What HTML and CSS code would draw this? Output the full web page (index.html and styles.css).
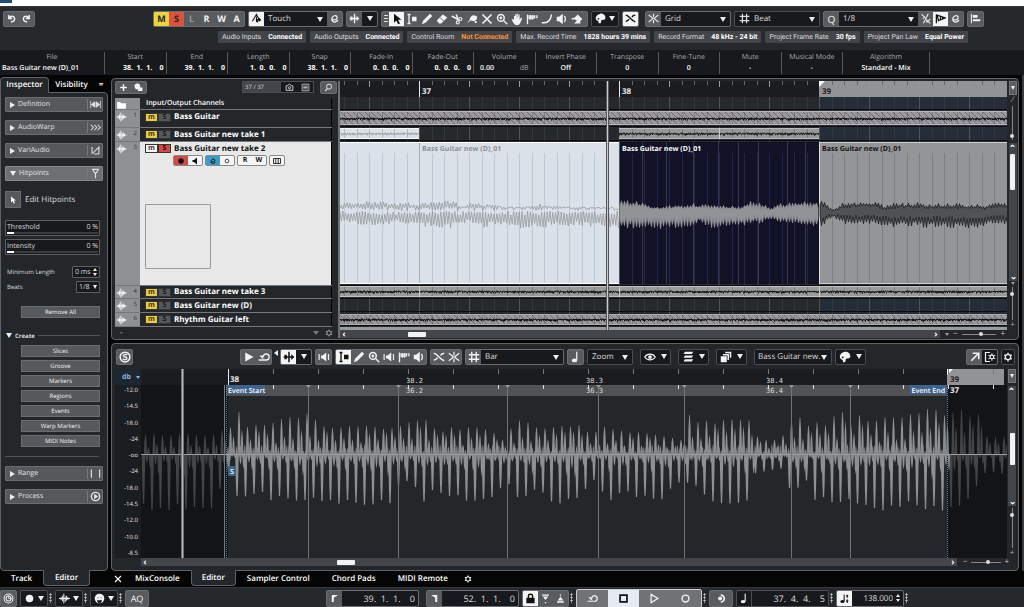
FILE: index.html
```html
<!DOCTYPE html>
<html lang="en">
<head>
<meta charset="utf-8">
<title>Project – Sample Editor</title>
<link rel="stylesheet" href="styles.css">
</head>
<body>
<svg class="sprite" aria-hidden="true">
  <symbol id="undo" viewBox="0 0 16 16"><path d="M4 3v5h5M4.500 7.500C7 3.500 12.500 4 12.500 8.500c0 3-2.500 4.500-5.500 4.500" fill="none" stroke="currentColor" stroke-width="2"/></symbol>
  <symbol id="redo" viewBox="0 0 16 16"><path d="M12 3v5H7M11.500 7.500C9 3.500 3.500 4 3.500 8.500c0 3 2.500 4.500 5.500 4.500" fill="none" stroke="currentColor" stroke-width="2"/></symbol>
  <symbol id="edit" viewBox="0 0 16 16"><path d="M4 9.500C10 11 13 8 11.500 5.500 10 3 6 3.500 4.500 7 3 11 6 14 9 13c2-.6 3.500-2 4-3" fill="none" stroke="currentColor" stroke-width="1.800"/></symbol>
  <symbol id="metro" viewBox="0 0 16 16"><path d="M2 12 8 2l4 8H7M8 5v8M8 10l5-1" fill="none" stroke="currentColor" stroke-width="1.500"/><path d="m11 6 4 4-4 3zM7 10h3v5z" fill="currentColor"/></symbol>
  <symbol id="locate" viewBox="0 0 16 16"><path d="M8 1v14M1 8h13" stroke="currentColor" stroke-width="2"/><path d="M2 5h3v6H2zM11 4l4 4-4 4z" fill="currentColor"/></symbol>
  <symbol id="arrow" viewBox="0 0 16 16"><path d="M4 1v12l3-3 2.500 5 2.500-1-2.500-5H14z" fill="currentColor"/></symbol>
  <symbol id="range" viewBox="0 0 16 16"><path d="M2 2h4M2 14h4M4 2v12" stroke="currentColor" stroke-width="1.800"/><path d="M8 5h6v6H8z" fill="currentColor"/></symbol>
  <symbol id="pencil" viewBox="0 0 16 16"><path d="m1 15 2-5 9-9 3 3-9 9z" fill="currentColor"/></symbol>
  <symbol id="eraser" viewBox="0 0 16 16"><path d="m1 10 8-8 6 4-8 8H4z" fill="currentColor"/><path d="m5 6 6 5" stroke="#55585b"/></symbol>
  <symbol id="cut" viewBox="0 0 16 16"><path d="m1 4 9 5M7 2l3 8" stroke="currentColor" stroke-width="2"/><circle cx="12.500" cy="8" r="2" fill="none" stroke="currentColor" stroke-width="1.500"/><circle cx="9" cy="12.500" r="2" fill="none" stroke="currentColor" stroke-width="1.500"/></symbol>
  <symbol id="glue" viewBox="0 0 16 16"><path d="m1 14 4-5c0-3 3-6 5-6l4 1c2 2 0 6-3 7l-5-1z" fill="currentColor"/><circle cx="13" cy="12" r="1.500" fill="currentColor"/></symbol>
  <symbol id="cross" viewBox="0 0 16 16"><path d="m2 2 12 12M14 2 2 14" stroke="currentColor" stroke-width="2.200"/></symbol>
  <symbol id="zoom" viewBox="0 0 16 16"><circle cx="6.500" cy="6.500" r="4.500" fill="none" stroke="currentColor" stroke-width="2"/><path d="m10 10 5 5M4.500 6.500h4M6.500 4.500v4" stroke="currentColor" stroke-width="1.800"/></symbol>
  <symbol id="hand" viewBox="0 0 16 16"><path d="M4 9V4h1.500v4V2H7v6l.5-7H9v7l1-6h1.500v7l2-3 1.500 1-3 7-2 2H6l-3-3-2-4 1-1z" fill="currentColor"/></symbol>
  <symbol id="comp" viewBox="0 0 16 16"><path d="M2 2v13M5.500 3v6M8.500 3v6M11.500 3v4M14.500 3v4" stroke="currentColor" stroke-width="1.800"/><path d="M3 3h8v5H3z" fill="currentColor" opacity=".7"/></symbol>
  <symbol id="curve" viewBox="0 0 16 16"><path d="M1 13c8 1 12-3 13-11" fill="none" stroke="currentColor" stroke-width="2"/></symbol>
  <symbol id="speaker" viewBox="0 0 16 16"><path d="M1 5h3l5-4v14l-5-4H1z" fill="currentColor"/><path d="M11 4c2 2 2 6 0 8" fill="none" stroke="currentColor" stroke-width="1.800"/></symbol>
  <symbol id="bucket" viewBox="0 0 16 16"><path d="m4 7 5-5 6 6-5 6H4l4-4z" fill="currentColor"/><path d="M1 8c5-2 9 1 11 6" stroke="currentColor" stroke-width="2" fill="none"/></symbol>
  <symbol id="palette" viewBox="0 0 16 16"><path d="M7.500 1C12 0 16 4 15 8c0 2-3 2-5 2s0 5-3 5H5c1-2 0-3-2-4C0 9 0 3 7.500 1z" fill="currentColor"/><circle cx="5" cy="8.500" r="1.300" fill="#202326"/></symbol>
  <symbol id="xfade" viewBox="0 0 16 16"><path d="M1 3c3 0 4 2 7 5s4 4 7 5M1 12c3 0 4-2 5-3M10 6c1-2 3-3 5-3" fill="none" stroke="currentColor" stroke-width="2"/></symbol>
  <symbol id="snap" viewBox="0 0 16 16"><path d="M8 1v5M8 10v5M1 3l4 3M15 3l-4 3M1 13l4-3M15 13l-4-3M5 6l2 2-2 2M11 6 9 8l2 2" fill="none" stroke="currentColor" stroke-width="1.600"/></symbol>
  <symbol id="hash" viewBox="0 0 16 16"><path d="M5 1v14M11 1v14M1 5h14M1 11h14" stroke="currentColor" stroke-width="1.800"/></symbol>
  <symbol id="triplet" viewBox="0 0 16 16"><path d="M12 1 5 15M2 2l5 4-3 2M10 9v5M15 9l-4 3 4 3" stroke="currentColor" stroke-width="1.500" fill="none"/></symbol>
  <symbol id="flag" viewBox="0 0 16 16"><path d="M2 2v13M3 3l12 4-10 4zM8 5v4M11 5v4" fill="none" stroke="currentColor" stroke-width="1.800"/></symbol>
  <symbol id="align" viewBox="0 0 16 16"><path d="M2 1v14" stroke="currentColor" stroke-width="1.500"/><path d="M4 3h7v4H4zM4 9h11v3H4z" fill="currentColor"/></symbol>
  <symbol id="plus" viewBox="0 0 16 16"><path d="M8 2v12M2 8h12" stroke="currentColor" stroke-width="2.500"/></symbol>
  <symbol id="preset" viewBox="0 0 16 16"><path d="M1 7a5 5 0 0 1 10-2v3h4v6H7v-3H3z" fill="currentColor"/></symbol>
  <symbol id="camera" viewBox="0 0 16 16"><path d="M2 5h2l4-3 4 3h2v8H2z" fill="none" stroke="currentColor" stroke-width="1.600"/><circle cx="8" cy="8.500" r="2" fill="none" stroke="currentColor" stroke-width="1.500"/></symbol>
  <symbol id="list" viewBox="0 0 16 16"><path d="M2 2h12v12H2zM4 5.500h8M4 8h8M4 10.500h8" fill="none" stroke="currentColor" stroke-width="1.400"/></symbol>
  <symbol id="search" viewBox="0 0 16 16"><circle cx="9" cy="6.500" r="4.500" fill="none" stroke="currentColor" stroke-width="1.600"/><path d="m6 10-4 4" stroke="currentColor" stroke-width="2"/></symbol>
  <symbol id="folder" viewBox="0 0 16 16"><path d="M1 3h5l1 2h8v9H1z" fill="currentColor"/></symbol>
  <symbol id="wave" viewBox="0 0 16 16"><path d="M0 8h16M3 6v4M5 4v8M7 1v14M9 5v8M11 4v7M13 6v4" stroke="currentColor" stroke-width="1.400"/></symbol>
  <symbol id="mono" viewBox="0 0 16 16"><path d="M3 6h3l6-5v14l-6-5H3z" fill="currentColor"/></symbol>
  <symbol id="vibr" viewBox="0 0 16 16"><path d="M4 6h2l5-4v12l-5-4H4z" fill="currentColor"/><path d="M1.500 4v8M14 4v8" stroke="currentColor" stroke-width="1.600"/></symbol>
  <symbol id="cycle" viewBox="0 0 16 16"><path d="M1 12h10a4 4 0 1 0-4-5H4l3 3" fill="none" stroke="currentColor" stroke-width="1.800"/></symbol>
  <symbol id="play" viewBox="0 0 16 16"><path d="m3 2 11 6-11 6z" fill="currentColor"/></symbol>
  <symbol id="playo" viewBox="0 0 16 16"><path d="m3 2 10 6-10 6z" fill="none" stroke="currentColor" stroke-width="1.800"/></symbol>
  <symbol id="stop" viewBox="0 0 16 16"><path d="M3 3h10v10H3z" fill="none" stroke="currentColor" stroke-width="2.500"/></symbol>
  <symbol id="ring" viewBox="0 0 16 16"><circle cx="8" cy="8" r="5" fill="none" stroke="currentColor" stroke-width="2"/></symbol>
  <symbol id="dot" viewBox="0 0 16 16"><circle cx="8" cy="8" r="5.500" fill="currentColor"/></symbol>
  <symbol id="solo" viewBox="0 0 16 16"><circle cx="8" cy="8" r="6.500" fill="none" stroke="currentColor" stroke-width="2"/><path d="M11 5.500C9 3.500 5 5 6 7c1 1.500 4 .5 4.500 2.500S7 12.500 5 10.500" fill="none" stroke="currentColor" stroke-width="1.800"/></symbol>
  <symbol id="note" viewBox="0 0 16 16"><ellipse cx="6" cy="12.500" rx="3.500" ry="2.500" fill="currentColor"/><path d="M9 12V1" stroke="currentColor" stroke-width="1.600"/></symbol>
  <symbol id="eye" viewBox="0 0 16 16"><path d="M1 8c3-5 11-5 14 0-3 5-11 5-14 0z" fill="none" stroke="currentColor" stroke-width="1.600"/><circle cx="8" cy="8" r="2.500" fill="currentColor"/></symbol>
  <symbol id="layers" viewBox="0 0 16 16"><path d="M4 1h11l-2 3H2zM4 6h11l-2 3H2zM4 11h11l-2 3H2z" fill="currentColor"/></symbol>
  <symbol id="stack" viewBox="0 0 16 16"><path d="M7 1h8v8h-2V3H7zM4 4h8v8h-2V6H4zM1 7h8v8H1z" fill="currentColor"/></symbol>
  <symbol id="popout" viewBox="0 0 16 16"><path d="M5 3h8v8M13 3 3 13" fill="none" stroke="currentColor" stroke-width="2.200"/></symbol>
  <symbol id="gear" viewBox="0 0 16 16"><circle cx="8" cy="8" r="4.300" fill="none" stroke="currentColor" stroke-width="2"/><path d="M8 1v3M8 12v3M2 4.500l2.500 1.500M11.500 10l2.500 1.500M2 11.500 4.500 10M11.500 6 14 4.500" stroke="currentColor" stroke-width="2.200"/></symbol>
  <symbol id="setup" viewBox="0 0 16 16"><path d="M8 2H2v12h6" fill="none" stroke="currentColor" stroke-width="1.600"/><circle cx="10.500" cy="8" r="2.500" fill="none" stroke="currentColor" stroke-width="1.600"/><path d="M10.500 3v2M10.500 11v2M6 5.500l2 1M13 9.500l2 1M6 10.500l2-1M13 6.500l2-1" stroke="currentColor" stroke-width="1.400"/></symbol>
  <symbol id="lock" viewBox="0 0 16 16"><path d="M2 7h12v8H2z" fill="currentColor"/><path d="M5 8V4c0-3 6-3 6 0v4" fill="none" stroke="currentColor" stroke-width="2"/></symbol>
  <symbol id="punchin" viewBox="0 0 16 16"><path d="M3 2h10v2H3zM4 5h8l-4 5zM7 13h2v2H7z" fill="currentColor"/></symbol>
  <symbol id="punchout" viewBox="0 0 16 16"><path d="M7 2h2v2H7zM8 5l4 6H4zM3 12h10v2H3z" fill="currentColor"/></symbol>
  <symbol id="locl" viewBox="0 0 16 16"><path d="M4 3h9L7 7v6H4z" fill="currentColor"/></symbol>
  <symbol id="locr" viewBox="0 0 16 16"><path d="M12 3H3l6 4v6h3z" fill="currentColor"/></symbol>
  <symbol id="mix" viewBox="0 0 16 16"><circle cx="6" cy="8" r="3" fill="currentColor"/><path d="M7 3a5 5 0 1 1 0 10" fill="none" stroke="currentColor" stroke-width="2.500"/></symbol>
  <symbol id="tempo" viewBox="0 0 16 16"><ellipse cx="5" cy="12.500" rx="3" ry="2.200" fill="currentColor"/><path d="M7.500 12V2M12 7V3M12 9v5" stroke="currentColor" stroke-width="1.500"/><path d="m10 5 2-3 2 3zM10 11l2 3 2-3z" fill="currentColor"/></symbol>
  <symbol id="clock" viewBox="0 0 16 16"><circle cx="8" cy="8" r="6.500" fill="none" stroke="currentColor" stroke-width="1.500"/><circle cx="8" cy="8" r="3.500" fill="none" stroke="currentColor" stroke-width="1.500"/><path d="M8 8V4M8 8h5" stroke="currentColor"/></symbol>
  <symbol id="din" viewBox="0 0 16 16"><circle cx="8" cy="8" r="7" fill="currentColor"/><path d="M5 11h6l-1 3H6zM5 7h1.500M9.500 7H11" fill="#17191c" stroke="#17191c" stroke-width="1"/></symbol>
  <symbol id="defn" viewBox="0 0 16 16"><path d="M1 3v10M15 3v10M2 8l5-4v8zM14 8 9 4v8z" fill="currentColor" stroke="currentColor" stroke-width="1.200"/></symbol>
  <symbol id="warp" viewBox="0 0 16 16"><path d="m1 4 4 4-4 4M6 4l4 4-4 4M11 4l4 4-4 4" fill="none" stroke="currentColor" stroke-width="1.500"/></symbol>
  <symbol id="vari" viewBox="0 0 16 16"><path d="M3 3v10M13 2v11M4 12l9-9M6 13h7" fill="none" stroke="currentColor" stroke-width="1.500"/></symbol>
  <symbol id="hitp" viewBox="0 0 16 16"><path d="M3 2h10M4 3l4 5 4-5M8 7v8" fill="none" stroke="currentColor" stroke-width="1.600"/></symbol>
  <symbol id="bars" viewBox="0 0 16 16"><path d="M2 2v12M14 2v12" stroke="currentColor" stroke-width="1.600"/></symbol>
  <symbol id="proc" viewBox="0 0 16 16"><circle cx="8" cy="8" r="6" fill="none" stroke="currentColor" stroke-width="2"/><path d="m6 4 6 4-6 4z" fill="currentColor"/></symbol>
  <symbol id="lanes" viewBox="0 0 16 16"><path d="M1 3h14v10H1zM5.500 3v10M10.500 3v10" fill="none" stroke="currentColor" stroke-width="1.700"/></symbol>
</svg>

<div class="app">
  <div class="titlebar"><span class="appicon"></span></div>
  <header class="top">
    <div class="toolbar main-tools">
      <div class="group"><button aria-label="Undo"><svg><use href="#undo"/></svg></button><button aria-label="Redo"><svg><use href="#redo"/></svg></button></div>
      <div class="group letters push"><button class="mute">M</button><button class="solo">S</button><button class="dim">L</button><button>R</button><button>W</button><button>A</button></div>
      <div class="group"><button class="on" aria-label="Automation"><svg><use href="#metro"/></svg></button><span class="sel w-touch"><select aria-label="Automation mode"><option>Touch</option></select></span><button aria-label="Edit automation"><svg><use href="#edit"/></svg></button></div>
      <div class="group"><button aria-label="Auto-scroll"><svg><use href="#locate"/></svg></button><button class="dark" aria-label="Auto-scroll options"><i class="tri"></i></button></div>
      <div class="group tools">
        <span class="grip"></span>
        <button class="on" aria-label="Select"><svg><use href="#arrow"/></svg></button><button aria-label="Range"><svg><use href="#range"/></svg></button><button aria-label="Draw"><svg><use href="#pencil"/></svg></button><button aria-label="Erase"><svg><use href="#eraser"/></svg></button><button aria-label="Split"><svg><use href="#cut"/></svg></button><button aria-label="Glue"><svg><use href="#glue"/></svg></button><button aria-label="Mute"><svg><use href="#cross"/></svg></button><button aria-label="Zoom"><svg><use href="#zoom"/></svg></button><button aria-label="Hand"><svg><use href="#hand"/></svg></button><button aria-label="Comp"><svg><use href="#comp"/></svg></button><button aria-label="Line"><svg><use href="#curve"/></svg></button><button aria-label="Play"><svg><use href="#speaker"/></svg></button><button aria-label="Color"><svg><use href="#bucket"/></svg></button>
      </div>
      <div class="group black"><button aria-label="Color menu"><svg><use href="#palette"/></svg><i class="tri"></i></button></div>
      <div class="group"><button class="on" aria-label="Zero crossings"><svg><use href="#xfade"/></svg></button></div>
      <div class="group gap"><button aria-label="Snap"><svg><use href="#snap"/></svg></button><span class="sel w-grid"><select aria-label="Snap type"><option>Grid</option></select></span></div>
      <div class="group black"><svg class="lead"><use href="#hash"/></svg><span class="sel w-beat"><select aria-label="Grid type"><option>Beat</option></select></span></div>
      <div class="group"><button class="q">Q</button><span class="sel w-quant"><select aria-label="Quantize"><option>1/8</option></select></span><button aria-label="Soft quantize"><svg><use href="#triplet"/></svg></button><button class="on" aria-label="Iterative"><svg><use href="#flag"/></svg></button><button aria-label="Quantize panel"><svg><use href="#edit"/></svg></button></div>
      <div class="group"><button aria-label="Align"><svg><use href="#align"/></svg></button></div>
    </div>
    <div class="chips">
      <span class="chip">Audio Inputs<b>Connected</b></span>
      <span class="chip">Audio Outputs<b>Connected</b></span>
      <span class="chip">Control Room<b class="warn">Not Connected</b></span>
      <span class="chip">Max. Record Time<b>1828 hours 39 mins</b></span>
      <span class="chip">Record Format<b>48 kHz - 24 bit</b></span>
      <span class="chip">Project Frame Rate<b>30 fps</b></span>
      <span class="chip">Project Pan Law<b>Equal Power</b></span>
    </div>
  </header>

  <dl class="info">
    <div class="file"><dt>File</dt><dd>Bass Guitar new (D)_01</dd></div>
    <div class="num"><dt>Start</dt><dd>38.  1.  1.    0</dd></div>
    <div class="num"><dt>End</dt><dd>39.  1.  1.    0</dd></div>
    <div class="num"><dt>Length</dt><dd>1.  0.  0.    0</dd></div>
    <div class="num"><dt>Snap</dt><dd>38.  1.  1.    0</dd></div>
    <div class="num"><dt>Fade-In</dt><dd>0.  0.  0.    0</dd></div>
    <div class="num"><dt>Fade-Out</dt><dd>0.  0.  0.    0</dd></div>
    <div class="vol"><dt>Volume</dt><dd>0.00<span>dB</span></dd></div>
    <div><dt>Invert Phase</dt><dd>Off</dd></div>
    <div><dt>Transpose</dt><dd>0</dd></div>
    <div><dt>Fine-Tune</dt><dd>0</dd></div>
    <div><dt>Mute</dt><dd>-</dd></div>
    <div><dt>Musical Mode</dt><dd>-</dd></div>
    <div class="algo"><dt>Algorithm</dt><dd>Standard - Mix</dd></div>
  </dl>

  <main class="work">
    <aside class="left">
      <nav class="tabs toptabs"><button class="tab active">Inspector</button><button class="tab">Visibility</button><button class="tab menu">=</button></nav>
      <div class="panel inspector">
        <button class="section"><i class="tri r"></i><span>Definition</span><svg><use href="#defn"/></svg></button>
        <button class="section"><i class="tri r"></i><span>AudioWarp</span><svg><use href="#warp"/></svg></button>
        <button class="section"><i class="tri r"></i><span>VariAudio</span><svg><use href="#vari"/></svg></button>
        <button class="section open"><i class="tri"></i><span>Hitpoints</span><svg><use href="#hitp"/></svg></button>
        <div class="edit"><button id="edithp" aria-label="Edit Hitpoints"><svg><use href="#arrow"/></svg></button><label for="edithp">Edit Hitpoints</label></div>
        <div class="sliders">
          <div class="slider"><label for="thr">Threshold</label><output for="thr">0 %</output><input id="thr" type="range" value="0"></div>
          <div class="slider"><label for="int">Intensity</label><output for="int">0 %</output><input id="int" type="range" value="0"></div>
        </div>
        <div class="fields">
          <div class="field"><label for="minlen">Minimum Length</label><span class="spin"><input id="minlen" value="0 ms"><i class="updown"></i></span></div>
          <div class="field"><label for="beats">Beats</label><span class="sel w-beats"><select id="beats"><option>1/8</option></select></span></div>
        </div>
        <button class="wide">Remove All</button>
        <div class="create"><i class="tri"></i><b>Create</b></div>
        <div class="stack"><button class="wide">Slices</button><button class="wide">Groove</button><button class="wide">Markers</button><button class="wide">Regions</button><button class="wide">Events</button><button class="wide">Warp Markers</button><button class="wide">MIDI Notes</button></div>
        <hr>
        <button class="section"><i class="tri r"></i><span>Range</span><svg><use href="#bars"/></svg></button>
        <button class="section"><i class="tri r"></i><span>Process</span><svg><use href="#proc"/></svg></button>
      </div>
      <nav class="tabs lefttabs"><button class="tab">Track</button><button class="tab active">Editor</button></nav>
    </aside>

    <section class="right">
      <div class="panel project">
        <div class="tracks">
          <div class="trackhead">
            <div class="group"><button aria-label="Add track"><svg><use href="#plus"/></svg></button><button aria-label="Track preset"><svg><use href="#preset"/></svg></button></div>
            <div class="count"><span>37 / 37</span><button aria-label="Visibility agents"><svg><use href="#camera"/></svg></button><button aria-label="Track types"><svg><use href="#list"/></svg></button></div>
            <div class="group"><button aria-label="Find track"><svg><use href="#search"/></svg></button></div>
          </div>
          <div class="track io"><div class="side"><svg><use href="#folder"/></svg></div><div class="body"><b>Input/Output Channels</b></div></div>
          <div class="track t1"><div class="side"><svg><use href="#wave"/></svg>1</div><div class="body"><button class="m">m</button><button class="s">S</button><b>Bass Guitar</b></div></div>
          <div class="track t2"><div class="side"><svg><use href="#wave"/></svg>2</div><div class="body"><button class="m">m</button><button class="s">S</button><b>Bass Guitar new take 1</b></div></div>
          <div class="track t3"><div class="side"><svg><use href="#wave"/></svg>3</div><div class="body">
            <div class="line"><button class="m off">m</button><button class="s hot">S</button><b>Bass Guitar new take 2</b></div>
            <div class="ctl"><span class="pair"><button class="rec" aria-label="Record enable"><svg><use href="#dot"/></svg></button><button aria-label="Monitor"><svg><use href="#mono"/></svg></button></span><span class="pair"><button class="blue" aria-label="Edit channel"><svg><use href="#edit"/></svg></button><button aria-label="Bypass"><svg class="tiny"><use href="#ring"/></svg></button></span><span class="pair"><button>R</button><button>W</button></span><span class="pair"><button aria-label="Lanes"><svg><use href="#lanes"/></svg></button></span></div>
            <div class="picture"></div>
          </div></div>
          <div class="track t4"><div class="side"><svg><use href="#wave"/></svg>4</div><div class="body"><button class="m">m</button><button class="s">S</button><b>Bass Guitar new take 3</b></div></div>
          <div class="track t5"><div class="side"><svg><use href="#wave"/></svg>5</div><div class="body"><button class="m">m</button><button class="s">S</button><b>Bass Guitar new (D)</b></div></div>
          <div class="track t6"><div class="side"><svg><use href="#wave"/></svg>6</div><div class="body"><button class="m">m</button><button class="s">S</button><b>Rhythm Guitar left</b></div></div>
          <div class="trackfoot"><span>-</span><i class="tri"></i><svg><use href="#gear"/></svg></div>
        </div>
        <div class="divider"></div>
        <div class="timeline">
          <svg id="arrange" class="arrange" role="img" aria-label="Project timeline"></svg>
          <div class="hscroll"><span class="chev">‹</span><span class="thumb t-arr"></span><span class="chev end">›</span></div>
        </div>
        <div class="vbar">
          <button class="drop" aria-label="Ruler options"><i class="tri"></i></button>
          <span class="sign">⁄</span>
          <span class="vline"></span>
          <div class="vscroll"><span class="chev up">‹</span><span class="thumb"></span><span class="chev dn">‹</span></div>
          <i class="tri small"></i>
          <span class="vline top"></span>
          <span class="sign">+</span>
        </div>
        <div class="zoomer"><i class="tri small"></i><span>−</span><input type="range" value="58" aria-label="Horizontal zoom"><span>+</span></div>
      </div>

      <div class="panel editor">
        <div class="toolbar ed-tools">
          <div class="group"><button aria-label="Solo editor"><svg><use href="#solo"/></svg></button></div>
          <div class="group push"><button aria-label="Audition"><svg><use href="#play"/></svg></button><button aria-label="Loop audition"><svg><use href="#cycle"/></svg></button></div>
          <i class="tri l"></i>
          <div class="group"><button class="on" aria-label="Auto-scroll"><svg><use href="#locate"/></svg></button><button class="dark" aria-label="Auto-scroll options"><i class="tri"></i></button></div>
          <div class="group"><button aria-label="Acoustic feedback"><svg><use href="#vibr"/></svg></button></div>
          <div class="group"><button class="on" aria-label="Range"><svg><use href="#range"/></svg></button><button aria-label="Draw"><svg><use href="#pencil"/></svg></button><button aria-label="Zoom"><svg><use href="#zoom"/></svg></button><button aria-label="Play"><svg><use href="#vibr"/></svg></button><button aria-label="Warp"><svg><use href="#comp"/></svg></button><button aria-label="Scrub"><svg><use href="#speaker"/></svg></button></div>
          <div class="group"><button aria-label="Zero crossings"><svg><use href="#xfade"/></svg></button><button aria-label="Snap"><svg><use href="#snap"/></svg></button></div>
          <div class="group"><button aria-label="Grid"><svg><use href="#hash"/></svg></button><span class="sel w-bar"><select aria-label="Grid value"><option>Bar</option></select></span></div>
          <div class="group"><button aria-label="Musical"><svg><use href="#note"/></svg></button></div>
          <div class="group black"><span class="sel w-zoom"><select aria-label="Zoom preset"><option>Zoom</option></select></span></div>
          <div class="group black wide-btn"><button aria-label="View"><svg><use href="#eye"/></svg><i class="tri"></i></button></div>
          <div class="group black wide-btn"><button aria-label="Layers"><svg><use href="#layers"/></svg><i class="tri"></i></button></div>
          <div class="group black wide-btn"><button aria-label="Clips"><svg><use href="#stack"/></svg><i class="tri"></i></button></div>
          <div class="group black spaced"><span class="sel w-clip"><select aria-label="Edited clip"><option>Bass Guitar new.</option></select></span></div>
          <div class="group black wide-btn tight"><button aria-label="Color"><svg><use href="#palette"/></svg><i class="tri"></i></button></div>
          <div class="group push"><button aria-label="Open in window"><svg><use href="#popout"/></svg></button><button class="dark" aria-label="Window layout"><svg><use href="#setup"/></svg></button></div>
          <div class="group black setup"><button aria-label="Setup"><svg><use href="#gear"/></svg></button></div>
        </div>
        <div class="edbody">
          <div class="scale"><div class="db">db<i class="tri small"></i></div><div class="ticks"><span>-12.0</span><span>-14.5</span><span>-18.0</span><span>-24</span><span>-oo</span><span>-24</span><span>-18.0</span><span>-14.5</span><span>-12.0</span><span>-10.0</span><span>-8.5</span></div></div>
          <div class="timeline">
            <svg id="sample" class="sample" role="img" aria-label="Sample waveform"></svg>
            <div class="hscroll"><span class="chev">‹</span><span class="thumb t-ed"></span><span class="chev end">›</span></div>
          </div>
          <div class="vbar">
            <button class="drop" aria-label="Ruler options"><i class="tri"></i></button>
            <div class="vscroll"><span class="chev up">‹</span><span class="thumb mid"></span><span class="chev dn">‹</span></div>
            <span class="vline top"></span>
            <span class="sign">+</span>
          </div>
          <div class="zoomer"><span>−</span><input type="range" value="58" aria-label="Horizontal zoom"><span>+</span></div>
        </div>
      </div>
      <nav class="tabs lower"><button class="tab close" aria-label="Close lower zone"><svg><use href="#cross"/></svg></button><button class="tab">MixConsole</button><button class="tab active">Editor</button><button class="tab">Sampler Control</button><button class="tab">Chord Pads</button><button class="tab">MIDI Remote</button><button class="tab setup" aria-label="Lower zone setup"><svg><use href="#gear"/></svg></button></nav>
    </section>
    <div class="edge"></div>
  </main>

  <footer class="transport">
    <div class="group"><button aria-label="Record time"><svg><use href="#clock"/></svg></button></div>
    <div class="group black"><button aria-label="Record mode"><svg><use href="#dot"/></svg><i class="tri"></i></button></div><i class="dots"></i>
    <div class="group black"><button aria-label="Audio record mode"><svg><use href="#wave"/></svg><i class="tri"></i></button></div><i class="dots"></i>
    <div class="group black"><button aria-label="MIDI record mode"><svg><use href="#din"/></svg><i class="tri"></i></button></div><i class="dots"></i>
    <div class="group"><button class="aq">AQ</button></div>
    <div class="group push"><button aria-label="Left locator"><svg><use href="#locl"/></svg></button><input class="pos" aria-label="Left locator position" value="39.  1.  1.    0"></div>
    <div class="group spaced"><button aria-label="Right locator"><svg><use href="#locr"/></svg></button><input class="pos" aria-label="Right locator position" value="52.  1.  1.    0"></div>
    <div class="group"><button class="on" aria-label="Lock punch"><svg><use href="#lock"/></svg></button><button aria-label="Punch in"><svg><use href="#punchin"/></svg></button><button aria-label="Punch out"><svg><use href="#punchout"/></svg></button></div><i class="dots"></i>
    <div class="group play"><button aria-label="Cycle"><svg><use href="#cycle"/></svg></button><button class="lit" aria-label="Stop"><svg><use href="#stop"/></svg></button><button aria-label="Start"><svg><use href="#playo"/></svg></button><button aria-label="Record"><svg><use href="#ring"/></svg></button></div><i class="dots"></i>
    <div class="group mixbtn"><button aria-label="Click"><svg><use href="#mix"/></svg></button></div>
    <div class="group black"><button class="unit" aria-label="Time format"><svg><use href="#note"/></svg></button><input class="pos" aria-label="Song position" value="37.  4.  4.    5"></div><i class="dots"></i>
    <div class="group"><button class="on" aria-label="Tempo track"><svg><use href="#tempo"/></svg></button><input class="bpm" aria-label="Tempo" value="138.000"><i class="updown"></i></div><i class="dots"></i>
  </footer>
</div>
<script src="waves.js"></script>
</body>
</html>
```

FILE: styles.css
```css
* { box-sizing: border-box; }
html, body { margin: 0; }
body { background: #050505; color: #dcdddd; font: 8px/1 "Open Sans", "Noto Sans", sans-serif; text-rendering: geometricPrecision; }
button, input, select { font: inherit; color: inherit; margin: 0; padding: 0; border: 0; background: none; min-width: 0; outline: 0; border-radius: 0; text-rendering: inherit; }
b { font-weight: 600; }
svg { display: block; flex: none; overflow: hidden; }
.sprite { position: absolute; width: 0; height: 0; }
dl, dd { margin: 0; }
.app { display: flex; flex-direction: column; min-height: 100vh; overflow: hidden; }

.titlebar { height: 6px; background: #fff; }
.appicon { display: block; width: 12px; height: 3px; background: #1d4e80; }
.top { background: #25292c; border-top: 1px solid #34383b; height: 44px; padding-top: 3px; }

.tri { display: block; flex: none; width: 0; height: 0; border: 3px solid transparent; border-top: 5px solid #eee; border-bottom: 0; }
.tri.r { border: 3px solid transparent; border-left: 5px solid #eee; border-right: 0; }
.tri.l { border: 3px solid transparent; border-right: 4px solid #eee; border-left: 0; align-self: flex-start; margin: 2px -1px 0 -1px; }
.tri.small { border-width: 3px 2px 0; border-top-color: #9a9c9e; }

.toolbar { display: flex; align-items: center; gap: 3px; height: 17px; padding: 0 3px; }
.toolbar, .transport { font-size: 9px; }
.toolbar select { font-size: 8px; }
.group { display: flex; flex: none; height: 16px; border: 1px solid #6a6d70; border-radius: 2px; background: #595c5f; overflow: hidden; }
.group button { display: flex; align-items: center; justify-content: center; flex: none; width: 15px; height: 14px; color: #f2f2f2; }
.group svg { width: 11px; height: 11px; }
.group.black { background: #17191c; border-color: #4b4e51; }
.group.black button { width: auto; gap: 3px; padding: 0 3px; }
.group .on { background: #f4f4f4; color: #111; }
.group .dark { background: #17191c; }
.group .lead { margin: 1px 0 0 4px; }
.push { margin-left: auto; }
.letters button { font-weight: 700; font-size: 9px; }
.letters .mute { background: #e8d63c; color: #222; }
.letters .solo { background: #dd5238; color: #222; }
.letters .dim { color: #97999b; }
.main-tools .push { margin-left: 115px; }
.main-tools .gap { margin-left: 3px; }
.group.tools { padding-right: 3px; }
.group.tools svg, .ed-tools svg { width: 12px; height: 12px; }
.grip { width: 7px; height: 14px; background: repeating-linear-gradient(#ddd 0 1px, transparent 1px 3px) 2px 3px / 4px 8px no-repeat; }
.q { font-size: 10px; }
.sel { position: relative; display: flex; background: #17191c; }
.sel::after { content: ""; position: absolute; right: 4px; top: 50%; margin-top: -2px; border: 3px solid transparent; border-top: 5px solid #eee; border-bottom: 0; pointer-events: none; }
select { appearance: none; width: 100%; padding: 0 10px 0 4px; }
.w-touch { width: 63px; }
.w-grid { width: 69px; }
.w-beat { width: 69px; }
.w-quant { width: 79px; }
.w-bar { width: 82px; }
.w-zoom { width: 44px; }
.w-clip { width: 76px; }
.w-clip select { padding-left: 3px; }

.chips { display: flex; gap: 4px; margin: 4px 0 0 218px; font-family: Roboto, "Open Sans", sans-serif; }
.chip { display: flex; align-items: center; justify-content: center; gap: 7px; height: 12px; padding: 0 4px; background: #42464a; color: #dcdcdc; font-size: 7px; white-space: nowrap; border-radius: 1px; }
.chip b { color: #fff; font-weight: 700; }
.chip .warn { color: #ff9030; }

.info { display: grid; grid-template-columns: 105px repeat(12, 1fr) 87px; height: 25px; background: #17191c; padding: 2px 94px 1px 0; white-space: pre; font-size: 7px; }
.info div { border-right: 1px solid #55585a; display: flex; flex-direction: column; justify-content: space-around; text-align: center; padding: 0 2px; }
.info dt { color: #a8aaab; }
.info dd { font-weight: 600; color: #fff; }
.info .file dd { text-align: left; }
.info .num dd { text-align: right; font-weight: 700; }
.info .vol dd { display: flex; justify-content: space-between; padding: 0 4px; }
.info .vol dd span { font-weight: 400; color: #a8aaab; }

.work { flex: 1; display: grid; grid-template-columns: 108px minmax(0, 1fr) 2px; column-gap: 3px; min-height: 0; background: #050505; }
.edge { background: #3a3d40; margin-bottom: 16px; }
.panel { background: #23272a; border: 1px solid #606366; border-radius: 4px; }
.left, .right { display: flex; flex-direction: column; min-width: 0; }
.tabs { display: flex; flex: none; }
.tab { display: flex; align-items: center; justify-content: center; font-weight: 600; font-size: 8px; color: #fff; border: 1px solid transparent; white-space: nowrap; }
.tab svg { width: 8px; height: 8px; }
.toptabs { padding-top: 2px; }
.toptabs .tab { width: 45px; height: 15px; }
.toptabs .active { width: 49px; height: 16px; background: #23272a; border-color: #606366; border-bottom-color: #23272a; border-radius: 4px 4px 0 0; margin-bottom: -1px; position: relative; z-index: 1; }
.toptabs .menu { width: 14px; }
.lefttabs .tab { width: 43px; height: 15px; }
.tabs.lefttabs, .tabs.lower { height: 16px; }
.lefttabs .active, .lower .active { width: 47px; background: #23272a; border-color: #606366; border-top-color: #23272a; border-radius: 0 0 4px 4px; margin-top: -1px; height: 16px; position: relative; z-index: 1; }
.lower .tab { height: 15px; padding: 0 10px; width: auto; }
.lower .close { width: 13px; padding: 0; }
.lower .setup { padding: 0 4px; }
.lower .active { height: 16px; margin: -1px 0 0; }

.inspector { flex: 1; display: flex; flex-direction: column; gap: 8px; padding: 4px 4px 0; border-top-left-radius: 0; }
.section { display: flex; align-items: center; height: 15px; flex: none; background: #56595c; border: 1px solid #6b6e71; border-radius: 1px; padding-left: 4px; gap: 3px; color: #e4e4e4; font-size: 7px; }
.section.open { background: #6d7073; border-color: #85888a; }
.section span { flex: 1; text-align: left; }
.section svg { width: 15px; height: 11px; border-left: 1px solid #76797b; padding: 0 1px 0 2px; }
.edit { display: flex; align-items: center; gap: 4px; margin-top: 2px; }
.edit button { width: 16px; height: 17px; display: flex; align-items: center; justify-content: center; background: #56595c; border: 1px solid #6b6e71; color: #fff; }
.edit svg { width: 8px; height: 8px; }
.sliders { display: grid; gap: 3px; margin: 4px 3px 0 0; }
.slider { display: grid; grid-template-columns: 1fr auto; align-items: center; height: 16px; border: 1px solid #5d6063; background: #17191c; padding: 2px 1px 0; font-size: 7px; border-radius: 1px; }
.slider input { grid-column: 1 / 3; appearance: none; width: 100%; height: 2px; background: #3a3d40; }
.slider input::-webkit-slider-thumb { appearance: none; width: 7px; height: 2px; background: #fff; }
.fields { display: grid; gap: 3px; margin: 3px 3px 0 2px; font-size: 6px; }
.field { display: flex; align-items: center; justify-content: space-between; height: 12px; }
.field label { white-space: nowrap; }
.spin, .w-beats { display: flex; align-items: center; height: 12px; border: 1px solid #5d6063; background: #17191c; border-radius: 1px; font-size: 7px; }
.spin { width: 28px; padding-left: 2px; }
.spin input { width: 18px; }
.w-beats { width: 24px; }
.w-beats select { padding: 0 0 0 2px; }
.w-beats::after { right: 2px; border-width: 4px 2px 0; }
.updown { display: flex; flex-direction: column; gap: 2px; align-self: center; }
.updown::before, .updown::after { content: ""; border: 2px solid transparent; }
.updown::before { border-bottom: 3px solid #eee; border-top: 0; }
.updown::after { border-top: 3px solid #eee; border-bottom: 0; }
.wide { display: flex; align-items: center; justify-content: center; margin: 0 3px 0 16px; height: 12px; background: #56595c; border: 1px solid #6b6e71; font-size: 6px; color: #f2f2f2; }
.inspector > .wide { margin-top: 5px; }
.create { display: flex; align-items: center; gap: 3px; margin: 3px 3px -5px 1px; font-size: 6px; height: 13px; }
.create b { font-weight: 700; }
.create::after { content: ""; flex: 1; height: 1px; background: #505356; }
.stack { display: grid; gap: 3px; }
hr { border: 0; height: 1px; background: #505356; margin: 1px 3px 1px 0; width: 94px; }

.panel.project { margin: 3px 0; display: grid; grid-template-columns: 223px 2px minmax(0, 1fr) 11px; padding: 2px 0 1px 3px; position: relative; }
.tracks { display: flex; flex-direction: column; }
.trackhead { height: 17px; display: flex; align-items: flex-start; gap: 6px; padding-right: 1px; }
.trackhead .group { height: 13px; }
.trackhead .group button { height: 11px; }
.trackhead svg { width: 9px; height: 9px; }
.count { margin-left: auto; display: flex; height: 12px; border: 1px solid #4b4e51; background: #42464a; font-size: 6px; align-items: center; }
.count span { width: 38px; padding-left: 2px; }
.count button { width: 16px; height: 10px; display: flex; align-items: center; justify-content: center; background: #17191c; }
.track { display: flex; border-bottom: 1px solid #75787a; margin-right: 6px; }
.side { width: 25px; flex: none; background: #8e9092; color: #333; font-size: 6px; display: flex; justify-content: space-between; padding: 2px 3px 0 1px; }
.side svg { width: 11px; height: 10px; color: #fff; }
.body { flex: 1; display: flex; align-items: center; padding-left: 5px; color: #fff; background: #23272a; border-right: 1px solid #000; }
.body b { margin-left: 3px; white-space: nowrap; font-weight: 700; }
.m, .s { width: 13px; height: 9px; font-weight: 700; font-size: 7px; display: flex; align-items: center; justify-content: center; background: #e9c84e; color: #4a3b00; border: 1px solid #333; }
.s { background: #55585b; color: #16181a; }
.io { height: 12px; }
.io .body { font-size: 7px; }
.io .body b { margin-left: 1px; font-weight: 600; }
.t1 { height: 18px; }
.t1 .body { align-items: flex-start; padding-top: 3px; }
.t2 { height: 14px; }
.t3 { height: 144px; }
.t4 { height: 13px; }
.t5, .t6 { height: 14px; }
.t3 .body { display: block; background: #e8e8e8; color: #111; padding-top: 2px; }
.line { display: flex; align-items: center; }
.m.off { background: #f4f4f4; color: #333; }
.s.hot { background: #cf4b43; color: #400; }
.ctl { display: flex; gap: 2px; margin: 2px 0 0 28px; }
.pair { display: flex; border: 1px solid #888; border-radius: 2px; background: #f6f6f6; }
.pair button { width: 14px; height: 9px; display: flex; align-items: center; justify-content: center; font-size: 7px; font-weight: 700; }
.pair svg { width: 8px; height: 8px; }
.pair .tiny { width: 6px; height: 6px; }
.rec { background: #cf4b43; }
.blue { background: #3a9cc8; }
.picture { width: 66px; height: 65px; border: 1px solid #999; border-radius: 1px; margin-top: 38px; }
.trackfoot { flex: 1; display: flex; align-items: center; gap: 6px; padding: 0 5px; }
.trackfoot span { flex: 1; }
.trackfoot .tri { border-top-color: #77797b; border-top-width: 4px; }
.trackfoot svg { width: 8px; height: 8px; color: #999; }
.divider { background: #6e7173; }
.timeline { min-width: 0; display: flex; flex-direction: column; }
.arrange { width: 100%; height: 249px; }
.sample { width: 100%; flex: 1; }
.hscroll { display: flex; align-items: center; height: 8px; background: #42464a; margin: 0 67px 0 0; }
.chev { width: 8px; text-align: center; font-weight: 700; font-size: 9px; line-height: 6px; color: #fff; }
.end { margin-left: auto; }
.thumb { display: block; background: #f2f2f2; border-radius: 1px; }
.hscroll .thumb { width: 18px; height: 5px; }
.t-arr { margin-left: 10%; }
.t-ed { margin-left: 23%; }
.vbar { display: flex; flex-direction: column; align-items: center; gap: 1px; padding-bottom: 8px; }
.drop { width: 8px; height: 14px; background: #5a5d60; border: 1px solid #75787a; display: flex; align-items: center; justify-content: center; }
.drop .tri { border-width: 4px 2px 0; }
.sign { font-size: 8px; height: 9px; color: #aaa; }
.vline { width: 1px; height: 34px; background: #888; position: relative; }
.vline::after { content: ""; position: absolute; left: -2px; bottom: 2px; width: 4px; height: 4px; border-radius: 50%; background: #ddd; }
.vline.top::after { bottom: auto; top: 5px; }
.vscroll { flex: 1; width: 8px; background: #42464a; display: flex; flex-direction: column; align-items: center; margin-top: 2px; }
.vscroll .thumb { width: 5px; height: 36px; margin-top: 5px; }
.vscroll .mid { margin-top: 41px; height: 32px; }
.chev.up { transform: rotate(90deg); }
.chev.dn { transform: rotate(-90deg); margin-top: auto; }
.zoomer { position: absolute; right: 13px; bottom: 1px; width: 60px; height: 8px; display: flex; align-items: center; gap: 4px; color: #ccc; }
.zoomer input { appearance: none; flex: 1; width: 28px; height: 1px; background: #888; }
.zoomer input::-webkit-slider-thumb { appearance: none; width: 4px; height: 4px; border-radius: 50%; background: #ddd; }

.panel.editor { flex: 1; display: flex; flex-direction: column; padding: 4px 1px 4px 3px; min-height: 226px; }
.ed-tools { padding: 0 2px 0 1px; }
.ed-tools .push { margin-left: 104px; }
.ed-tools .push ~ .push { margin-left: auto; }
.ed-tools .group.wide-btn button { padding: 0 3px; gap: 5px; }
.ed-tools .wide-btn, .spaced { margin-left: 4px; }
.ed-tools .tight { margin-left: 0; }
.ed-tools .group.setup button { width: 12px; padding: 0; }
.ed-tools .setup svg { width: 10px; height: 10px; }
.edbody { flex: 1; display: grid; grid-template-columns: 26px minmax(0, 1fr) 10px; margin-top: 4px; position: relative; }
.scale { background: #1b1e21; margin-bottom: 8px; display: flex; flex-direction: column; }
.db { height: 16px; background: #1c2733; color: #8fb4dd; display: flex; align-items: center; justify-content: space-between; padding: 0 1px 0 7px; font-weight: 700; font-size: 7px; flex: none; }
.db .tri { border-top-color: #8fb4dd; }
.ticks { flex: 1; display: flex; flex-direction: column; justify-content: space-between; text-align: right; padding: 2px 3px 2px 0; font-size: 6px; color: #e0e0e0; }
.edbody .vscroll { flex: 0 1 120px; }
.edbody .vline { flex: 1; }
.edbody .hscroll { margin-right: 50px; }
.edbody .zoomer { right: 8px; bottom: 0; width: 46px; gap: 3px; }

.transport { display: flex; align-items: center; gap: 3px; height: 20px; background: #26292c; border-top: 1px solid #34383b; padding-top: 1px; }
.transport .group { height: 17px; }
.transport .group button { height: 15px; }
.dots { width: 3px; height: 10px; margin-left: -2px; background: radial-gradient(#ccc 40%, transparent 60%) 0 0 / 3px 3px; }
.group .aq { width: 22px; }
.transport .push { margin-left: 174px; }
.pos { width: 76px; background: #17191c; text-align: right; padding-right: 3px; white-space: pre; }
.bpm { width: 41px; background: #17191c; text-align: right; font-size: 8px; }
.transport .group > .updown { background: #17191c; align-self: stretch; justify-content: center; padding: 0 3px; }
.transport .group.play { border-color: #ccc; background: #707375; height: 19px; }
.group.play button { width: 31px; height: 17px; }
.group .lit { background: #e4ebf2; color: #111; }
.transport .group.mixbtn button { width: 22px; }
.transport .group.black .unit { width: 15px; padding: 0; border-right: 1px solid #4b4e51; }

text { font-family: "Open Sans", "Noto Sans", sans-serif; }
.bar { font-size: 8px; font-weight: 700; fill: #eee; }
.beat { font-size: 7px; font-family: "DejaVu Sans Mono", monospace; fill: #ddd; }
.name { font-size: 7px; font-weight: 700; }
.event { font-size: 7px; font-weight: 600; fill: #fff; }
```

FILE: waves.js
```js
const NS = 'http://www.w3.org/2000/svg';

function add(parent, tag, attrs, text) {
  const el = document.createElementNS(NS, tag);
  for (const k in attrs) el.setAttribute(k, attrs[k]);
  if (text) el.textContent = text;
  parent.appendChild(el);
  return el;
}
const rect = (p, x, y, w, h, fill, extra) => add(p, 'rect', { x, y, width: w, height: h, fill, ...extra });

let seed = 11;
const rnd = () => ((seed = (seed * 16807) % 2147483647) / 2147483647);

// Linear interpolation over [x, value] pairs.
function at(env, x) {
  for (let i = 1; i < env.length; i++) {
    if (x <= env[i][0]) {
      const [x0, a] = env[i - 1], [x1, b] = env[i];
      return a + (b - a) * Math.max(0, (x - x0) / (x1 - x0));
    }
  }
  return env[env.length - 1][1];
}

function drawArrange(svg) {
  const W = 2400, bar = 79, loopEnd = 479;
  const defs = add(svg, 'defs', {});
  const pat = add(defs, 'pattern', { id: 'hatch', width: 6, height: 6, patternUnits: 'userSpaceOnUse' });
  rect(pat, 0, 0, 6, 6, '#9b999b');
  add(pat, 'path', { d: 'M0 0l6 6M-1 5l2 2M5-1l2 2', stroke: '#6f6d72', 'stroke-width': 1 });

  rect(svg, 0, 0, W, 249, '#25292b');
  rect(svg, loopEnd, 16, W, 233, '#252e38');
  rect(svg, 0, 0, W, 16, '#1a1c1f');
  rect(svg, loopEnd, 0, W, 16, '#929394');
  for (let i = -6; i < 180; i++) {
    const x = Math.round(bar + i * 12.5), beat = i % 4 === 0;
    rect(svg, x, 16, 1, 233, beat ? '#505457' : '#33383b');
    if (x !== 79 && x !== 279 && x !== 479) rect(svg, x, 0, 1, beat ? 6 : 4, beat ? '#999' : '#666');
  }
  rect(svg, 79, 0, 1, 16, '#eee');
  rect(svg, 279, 0, 1, 16, '#eee');
  add(svg, 'path', { d: 'M479 0h6l-6 6z', fill: '#fff' });
  add(svg, 'text', { x: 82, y: 13, class: 'bar' }, '37');
  add(svg, 'text', { x: 282, y: 13, class: 'bar' }, '38');
  add(svg, 'text', { x: 482, y: 13, class: 'bar', style: 'fill:#222' }, '39');

  for (const y of [28, 45, 59, 204, 217, 230, 244]) rect(svg, 0, y, W, 1, '#0c0e0f');

  const thin = (x, y, w, h, fill, ink, edge) => {
    rect(svg, x, y, w, h, fill);
    rect(svg, x, y, w, 1, edge);
    rect(svg, x, y + h - 1, w, 1, edge);
    for (let gx = 4; gx < W; gx += 12.5) if (gx > x && gx < x + w) rect(svg, Math.round(gx), y + 1, 1, h - 2, '#000', { opacity: 0.18 });
    let d = '';
    const mid = y + Math.round(h * 0.55);
    for (let px = x; px < x + w; px++) d += `M${px + 0.5} ${mid - 0.5 - rnd()}v${1 + rnd() * 1.5}`;
    add(svg, 'path', { d, stroke: ink });
  };
  thin(0, 30, W, 14, 'url(#hatch)', '#151515', '#bab5ba');
  thin(0, 47, 79, 11, '#dbe1e8', '#aaa', '#f3f6f8');
  thin(279, 47, 200, 11, '#979899', '#222', '#bbb');
  thin(0, 205, W, 11, '#979b99', '#1c1c1c', '#c2c5c3');
  thin(0, 233, W, 11, 'url(#hatch)', '#151515', '#a9adab');
  rect(svg, 0, 246, W, 3, '#979b99');
  for (const x of [79, 279, 479]) rect(svg, x, 205, 1, 11, '#ccc');
  rect(svg, 379, 47, 1, 11, '#ccc');

  rect(svg, 0, 61, 279, 142, '#dbe1e8');
  rect(svg, 279, 61, 200, 142, '#111226');
  rect(svg, 479, 61, W, 142, '#949596');
  for (let i = -6; i < 180; i++) {
    const x = Math.round(bar + i * 12.5);
    const c = x < 279 ? '#bccad6' : x < 479 ? '#22244b' : '#7d7e80';
    rect(svg, x, x === 79 ? 61 : 72, 1, x === 79 ? 142 : 131, x === 79 ? '#a9adb1' : c);
  }
  for (const x of [302, 326, 353, 378, 398, 418, 447, 465]) rect(svg, x, 61, 1, 142, '#36384e');
  rect(svg, 0, 61, 279, 1, '#fff');
  rect(svg, 0, 202, 279, 1, '#fff');
  rect(svg, 479, 61, W, 1, '#ccc');
  rect(svg, 479, 202, W, 1, '#ccc');
  rect(svg, 279, 61, 1, 142, '#555');
  rect(svg, 479, 61, 1, 142, '#ddd');

  // Left take: two thin outlines, one per channel half.
  const up = [[0, 9], [28, 12], [50, 10], [79, 9], [110, 12], [125, 5], [130, 10], [170, 5], [200, 8], [230, 5], [240, 6], [279, 4]];
  const dn = [[0, 12], [40, 17], [60, 12], [79, 17], [110, 19], [125, 13], [145, 18], [165, 14], [180, 19], [210, 17], [240, 16], [279, 18]];
  const zig = (x0, x1, base, env, sign) => {
    let d = '', flip = 0;
    for (let x = x0; x <= x1; x += 1.4) {
      const v = flip ? at(env, x) * (0.7 + rnd() * 0.3) : 1 + rnd() * 4;
      d += `${d ? 'L' : 'M'}${x.toFixed(1)} ${(base + sign * v).toFixed(1)}`;
      flip = 1 - flip;
    }
    return d;
  };
  add(svg, 'path', { d: zig(0, 279, 131, up, -1), fill: 'none', stroke: '#96999c', 'stroke-width': 0.8 });
  add(svg, 'path', { d: zig(0, 279, 129, dn, 1), fill: 'none', stroke: '#96999c', 'stroke-width': 0.8 });

  // Filled body whose edges alternate between a tight core and the full envelope.
  const solid = (x0, x1, mid, u, l, fill, stroke, core) => {
    let a = '', b = '', flip = 0;
    for (let x = x0; x <= x1; x += 1.5) {
      const k = flip ? 0.75 + rnd() * 0.35 : core + rnd() * 0.25;
      const m = flip ? 0.75 + rnd() * 0.35 : core - 0.2 + rnd() * 0.25;
      a += `${a ? 'L' : 'M'}${x.toFixed(1)} ${(mid - at(u, x) * k).toFixed(1)}`;
      b = `L${x.toFixed(1)} ${(mid + at(l, x) * m).toFixed(1)}` + b;
      flip = 1 - flip;
    }
    add(svg, 'path', { d: a + b + 'z', fill, stroke, 'stroke-width': 0.8 });
  };
  solid(280, 478, 132,
    [[280, 12], [300, 11], [315, 6], [350, 9], [375, 8], [400, 6], [408, 11], [425, 9], [430, 4], [438, 9], [478, 12]],
    [[280, 14], [310, 15], [350, 13], [360, 9], [370, 14], [400, 13], [420, 10], [430, 5], [445, 10], [478, 15]], '#929395', '#929395', 0.4);
  const gu = [[480, 13], [493, 4], [505, 11], [535, 12], [545, 7], [560, 10], [600, 9], [640, 8], [665, 10], [1200, 9], [W, 9]];
  const gl = [[480, 14], [493, 4], [505, 10], [535, 10], [545, 14], [570, 12], [590, 14], [640, 14], [650, 10], [668, 12], [1200, 13], [W, 12]];
  solid(480, W, 132, gu, gl, '#505255', '#1c1d20', 0.4);

  add(svg, 'text', { x: 82, y: 70, class: 'name', fill: '#8b8f92' }, 'Bass Guitar new (D)_01');
  add(svg, 'text', { x: 282, y: 70, class: 'name', fill: '#fff' }, 'Bass Guitar new (D)_01');
  add(svg, 'text', { x: 482, y: 70, class: 'name', fill: '#111' }, 'Bass Guitar new (D)_01');
  rect(svg, 266, 0, 3, 249, '#555');
  rect(svg, 267, 0, 1, 249, '#ccc');
}

function drawSample(svg) {
  const W = 2400, H = 900, start = 87, end = 806, zero = 85;
  rect(svg, 0, 0, W, H, '#131416');
  rect(svg, 0, 0, W, 16, '#1a1c1f');
  rect(svg, start, 16, end - start, H, '#23272a');
  rect(svg, start - 2, 16, end - start + 2, 11, '#515253');
  rect(svg, end, 0, 57, 16, '#929394');
  add(svg, 'path', { d: `M${end} 0h6l-6 6z`, fill: '#fff' });
  for (let i = 0; i < 18; i++) {
    const x = start + i * 45;
    if (x > 865 || i === 0) continue;
    rect(svg, x, 0, 1, 5, '#777');
    rect(svg, x, 16, 1, 4, '#ddd');
  }

  const up = [[0, 20], [70, 20], [87, 28], [91, 46], [98, 40], [104, 28], [115, 30], [135, 34], [165, 41], [171, 36], [184, 27], [220, 28], [250, 27], [260, 32], [277, 36], [287, 33], [294, 23], [310, 27], [344, 26], [359, 15], [364, 14], [371, 40], [379, 35], [390, 27], [405, 28], [430, 30], [440, 26], [450, 20], [460, 30], [472, 25], [485, 21], [505, 23], [520, 18], [535, 14], [543, 16], [547, 48], [556, 29], [565, 33], [606, 34], [614, 19], [626, 13], [644, 22], [652, 45], [662, 25], [672, 33], [682, 30], [695, 40], [702, 42], [706, 24], [713, 40], [723, 32], [744, 38], [764, 38], [784, 44], [806, 42], [812, 47], [821, 44], [836, 38], [844, 18], [1400, 18], [W, 20]];
  const dn = [[0, 54], [70, 54], [87, 18], [97, 45], [110, 38], [130, 45], [170, 48], [200, 51], [250, 50], [259, 30], [269, 26], [284, 50], [292, 34], [310, 44], [344, 48], [359, 33], [368, 30], [377, 50], [390, 38], [410, 46], [430, 50], [444, 35], [454, 27], [467, 50], [480, 38], [519, 51], [527, 36], [535, 30], [549, 28], [564, 44], [579, 51], [605, 50], [613, 20], [639, 14], [652, 46], [662, 22], [674, 46], [704, 50], [714, 50], [744, 57], [764, 50], [794, 57], [812, 58], [819, 56], [831, 40], [844, 20], [1400, 18], [W, 20]];

  let inside = '', outside = '', fuzz = '';
  // One lobe: nearly parallel sides for most of its length, then a narrow tip.
  const spike = (x, h, w, tip = 0.1) => `M${(x - w).toFixed(1)} ${zero}L${(x - w * 0.6).toFixed(1)} ${(zero + h * 0.7).toFixed(1)}L${(x - tip).toFixed(1)} ${(zero + h).toFixed(1)}L${(x + tip).toFixed(1)} ${(zero + h).toFixed(1)}L${(x + w * 0.6).toFixed(1)} ${(zero + h * 0.7).toFixed(1)}L${(x + w).toFixed(1)} ${zero}z`;
  for (let x = 2; x < W; x += 8.5) {
    const u = at(up, x), l = at(dn, x), j = () => 0.9 + rnd() * 0.14;
    const a = spike(x + 2.5, -u * j(), 1.6, 0.3) + spike(x + 5.5, -u * (0.35 + rnd() * 0.45), 1.4);
    const b = spike(x + 0.5, l * j(), 1.8, 0.6) + spike(x + 4, l * (0.1 + rnd() * 0.2), 1.4) + spike(x + 7, l * (0.1 + rnd() * 0.4), 1.1);
    if (x + 4 < start || x + 5 > end) outside += a + b;
    else inside += a + b;
  }
  for (let x = start; x < end; x += 2.1) fuzz += spike(x, -(2 + rnd() * 8), 1) + spike(x, 2 + rnd() * 5, 1);
  add(svg, 'path', { d: outside, fill: '#424446' });
  add(svg, 'path', { d: inside, fill: '#8e9092' });
  add(svg, 'path', { d: fuzz, fill: '#848688' });
  rect(svg, 0, zero, W, 1, '#9a9b9c');

  for (const x of [167, 257, 366, 457, 543, 650, 709]) {
    rect(svg, x, 16, 1, H, '#717375');
    add(svg, 'path', { d: `M${x - 2} 16h5l-2.500 3z`, fill: '#999' });
  }
  rect(svg, 83, 16, 1, H, '#77797b');
  rect(svg, start, 0, 1, 16, '#eee');
  for (const x of [start - 2, end]) add(svg, 'path', { d: `M${x + 0.5} 16v${H}`, stroke: '#4d82b8', 'stroke-dasharray': '1 1' });

  rect(svg, start, 16, 37, 9, '#3e638c');
  add(svg, 'text', { x: start, y: 24, class: 'event' }, 'Event Start');
  rect(svg, end - 37, 16, 37, 9, '#3e638c');
  add(svg, 'text', { x: end - 2, y: 24, class: 'event', 'text-anchor': 'end' }, 'Event End');
  rect(svg, start, 97, 8, 10, '#3e638c');
  add(svg, 'text', { x: start + 2, y: 105, class: 'event' }, 'S');
  add(svg, 'text', { x: 89, y: 13, class: 'bar' }, '38');
  add(svg, 'text', { x: end + 3, y: 13, class: 'bar', style: 'fill:#222' }, '39');
  add(svg, 'text', { x: end + 3, y: 24, class: 'bar' }, '37');
  for (const [x, n] of [[265, 2], [445, 3], [625, 4]]) {
    add(svg, 'text', { x, y: 14, class: 'beat' }, '38.' + n);
    add(svg, 'text', { x, y: 24, class: 'beat' }, '36.' + n);
  }
  rect(svg, 40, 0, 3, H, '#6e7072');
  rect(svg, 41, 0, 1, H, '#b8b8b8');
}

drawArrange(document.getElementById('arrange'));
drawSample(document.getElementById('sample'));
```
